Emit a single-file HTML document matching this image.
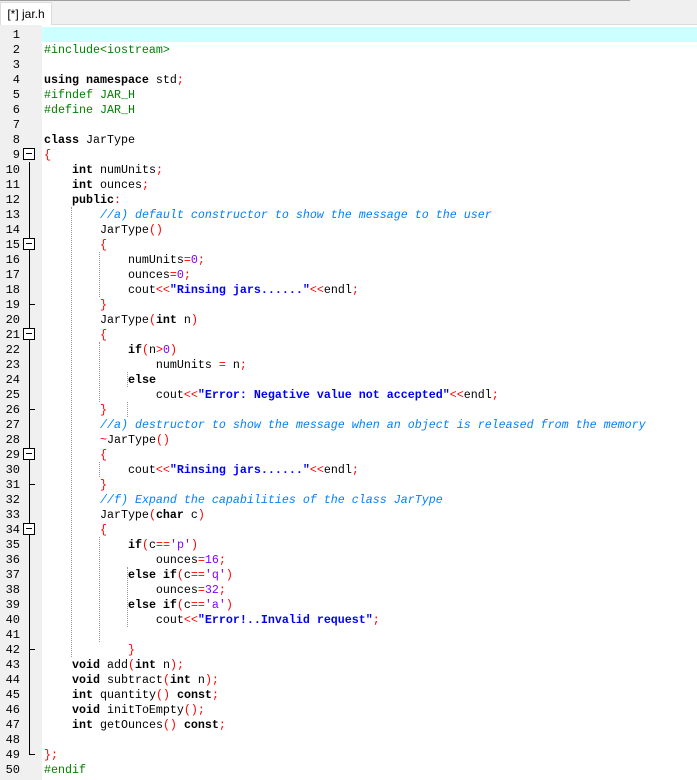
<!DOCTYPE html>
<html><head><meta charset="utf-8"><style>
body{margin:0;width:697px;height:780px;overflow:hidden;background:#fff;font-family:"Liberation Mono",monospace;}
#tabbar{position:absolute;left:0;top:0;width:697px;height:24px;background:#f0f0f0;border-bottom:1px solid #dcdcdc;}
#tabbar .line{position:absolute;left:0;top:0;width:630px;height:1px;background:#a0a0a0}
#tab{position:absolute;left:0;top:2px;width:50px;height:22px;background:#fff;border:1px solid #dcdcdc;border-bottom:none;font:12px "Liberation Sans",sans-serif;line-height:22px;text-align:center;color:#000}
#gutter{position:absolute;left:0;top:25px;width:42px;height:755px;background:#f0f0f0}
.r{position:absolute;left:0;height:15px;line-height:17px;font-size:11.67px;white-space:pre;width:697px}
.ln{position:absolute;left:0;width:20px;text-align:right;color:#000;font-size:12px}
.code{position:absolute;left:44px;color:#000}
.k{font-weight:bold}.o{color:#f00}.n{color:#8000ff}.s{color:#0000ff;font-weight:bold}.p{color:#008000}.c{color:#0080ff;font-style:italic}
.fb{position:absolute;left:23px;width:10px;height:10px;border:1px solid #000;background:#fff}
.fb:after{content:"";position:absolute;left:2px;top:4px;width:6px;height:1px;background:#000}
.vl{position:absolute;left:29px;width:1px;background:#000}
.tk{position:absolute;left:29px;width:6px;height:1px;background:#000}
.g{position:absolute;width:0;border-left:1px dotted #999}
</style></head><body>
<div id="tabbar"><div class="line"></div><div id="tab">[*] jar.h</div></div>
<div id="gutter"></div>
<div style="position:absolute;left:42px;top:27px;width:655px;height:15px;background:#ccffff"></div>
<div class="vl" style="top:162px;height:593px"></div>
<div class="fb" style="top:148px"></div>
<div class="fb" style="top:238px"></div>
<div class="fb" style="top:328px"></div>
<div class="fb" style="top:448px"></div>
<div class="fb" style="top:523px"></div>
<div class="tk" style="top:304px"></div>
<div class="tk" style="top:409px"></div>
<div class="tk" style="top:484px"></div>
<div class="tk" style="top:649px"></div>
<div class="tk" style="top:754px"></div>
<div class="g" style="left:71px;top:207px;height:450px"></div>
<div class="g" style="left:99px;top:252px;height:45px"></div>
<div class="g" style="left:99px;top:342px;height:60px"></div>
<div class="g" style="left:127px;top:372px;height:15px"></div>
<div class="g" style="left:127px;top:402px;height:15px"></div>
<div class="g" style="left:99px;top:462px;height:15px"></div>
<div class="g" style="left:99px;top:537px;height:105px"></div>
<div class="g" style="left:127px;top:567px;height:60px"></div>

<div class="r" style="top:27px"><span class="ln">1</span></div>
<div class="r" style="top:42px"><span class="ln">2</span><span class="code"><span class="p">#include&lt;iostream&gt;</span></span></div>
<div class="r" style="top:57px"><span class="ln">3</span></div>
<div class="r" style="top:72px"><span class="ln">4</span><span class="code"><span class="k">using namespace</span> std<span class="o">;</span></span></div>
<div class="r" style="top:87px"><span class="ln">5</span><span class="code"><span class="p">#ifndef JAR_H</span></span></div>
<div class="r" style="top:102px"><span class="ln">6</span><span class="code"><span class="p">#define JAR_H</span></span></div>
<div class="r" style="top:117px"><span class="ln">7</span></div>
<div class="r" style="top:132px"><span class="ln">8</span><span class="code"><span class="k">class</span> JarType</span></div>
<div class="r" style="top:147px"><span class="ln">9</span><span class="code"><span class="o">{</span></span></div>
<div class="r" style="top:162px"><span class="ln">10</span><span class="code">    <span class="k">int</span> numUnits<span class="o">;</span></span></div>
<div class="r" style="top:177px"><span class="ln">11</span><span class="code">    <span class="k">int</span> ounces<span class="o">;</span></span></div>
<div class="r" style="top:192px"><span class="ln">12</span><span class="code">    <span class="k">public</span><span class="o">:</span></span></div>
<div class="r" style="top:207px"><span class="ln">13</span><span class="code">        <span class="c">//a) default constructor to show the message to the user</span></span></div>
<div class="r" style="top:222px"><span class="ln">14</span><span class="code">        JarType<span class="o">()</span></span></div>
<div class="r" style="top:237px"><span class="ln">15</span><span class="code">        <span class="o">{</span></span></div>
<div class="r" style="top:252px"><span class="ln">16</span><span class="code">            numUnits<span class="o">=</span><span class="n">0</span><span class="o">;</span></span></div>
<div class="r" style="top:267px"><span class="ln">17</span><span class="code">            ounces<span class="o">=</span><span class="n">0</span><span class="o">;</span></span></div>
<div class="r" style="top:282px"><span class="ln">18</span><span class="code">            cout<span class="o">&lt;&lt;</span><span class="s">"Rinsing jars......"</span><span class="o">&lt;&lt;</span>endl<span class="o">;</span></span></div>
<div class="r" style="top:297px"><span class="ln">19</span><span class="code">        <span class="o">}</span></span></div>
<div class="r" style="top:312px"><span class="ln">20</span><span class="code">        JarType<span class="o">(</span><span class="k">int</span> n<span class="o">)</span></span></div>
<div class="r" style="top:327px"><span class="ln">21</span><span class="code">        <span class="o">{</span></span></div>
<div class="r" style="top:342px"><span class="ln">22</span><span class="code">            <span class="k">if</span><span class="o">(</span>n<span class="o">&gt;</span><span class="n">0</span><span class="o">)</span></span></div>
<div class="r" style="top:357px"><span class="ln">23</span><span class="code">                numUnits <span class="o">=</span> n<span class="o">;</span></span></div>
<div class="r" style="top:372px"><span class="ln">24</span><span class="code">            <span class="k">else</span></span></div>
<div class="r" style="top:387px"><span class="ln">25</span><span class="code">                cout<span class="o">&lt;&lt;</span><span class="s">"Error: Negative value not accepted"</span><span class="o">&lt;&lt;</span>endl<span class="o">;</span></span></div>
<div class="r" style="top:402px"><span class="ln">26</span><span class="code">        <span class="o">}</span></span></div>
<div class="r" style="top:417px"><span class="ln">27</span><span class="code">        <span class="c">//a) destructor to show the message when an object is released from the memory</span></span></div>
<div class="r" style="top:432px"><span class="ln">28</span><span class="code">        <span class="o">~</span>JarType<span class="o">()</span></span></div>
<div class="r" style="top:447px"><span class="ln">29</span><span class="code">        <span class="o">{</span></span></div>
<div class="r" style="top:462px"><span class="ln">30</span><span class="code">            cout<span class="o">&lt;&lt;</span><span class="s">"Rinsing jars......"</span><span class="o">&lt;&lt;</span>endl<span class="o">;</span></span></div>
<div class="r" style="top:477px"><span class="ln">31</span><span class="code">        <span class="o">}</span></span></div>
<div class="r" style="top:492px"><span class="ln">32</span><span class="code">        <span class="c">//f) Expand the capabilities of the class JarType</span></span></div>
<div class="r" style="top:507px"><span class="ln">33</span><span class="code">        JarType<span class="o">(</span><span class="k">char</span> c<span class="o">)</span></span></div>
<div class="r" style="top:522px"><span class="ln">34</span><span class="code">        <span class="o">{</span></span></div>
<div class="r" style="top:537px"><span class="ln">35</span><span class="code">            <span class="k">if</span><span class="o">(</span>c<span class="o">==</span><span class="n">'p'</span><span class="o">)</span></span></div>
<div class="r" style="top:552px"><span class="ln">36</span><span class="code">                ounces<span class="o">=</span><span class="n">16</span><span class="o">;</span></span></div>
<div class="r" style="top:567px"><span class="ln">37</span><span class="code">            <span class="k">else if</span><span class="o">(</span>c<span class="o">==</span><span class="n">'q'</span><span class="o">)</span></span></div>
<div class="r" style="top:582px"><span class="ln">38</span><span class="code">                ounces<span class="o">=</span><span class="n">32</span><span class="o">;</span></span></div>
<div class="r" style="top:597px"><span class="ln">39</span><span class="code">            <span class="k">else if</span><span class="o">(</span>c<span class="o">==</span><span class="n">'a'</span><span class="o">)</span></span></div>
<div class="r" style="top:612px"><span class="ln">40</span><span class="code">                cout<span class="o">&lt;&lt;</span><span class="s">"Error!..Invalid request"</span><span class="o">;</span></span></div>
<div class="r" style="top:627px"><span class="ln">41</span></div>
<div class="r" style="top:642px"><span class="ln">42</span><span class="code">            <span class="o">}</span></span></div>
<div class="r" style="top:657px"><span class="ln">43</span><span class="code">    <span class="k">void</span> add<span class="o">(</span><span class="k">int</span> n<span class="o">);</span></span></div>
<div class="r" style="top:672px"><span class="ln">44</span><span class="code">    <span class="k">void</span> subtract<span class="o">(</span><span class="k">int</span> n<span class="o">);</span></span></div>
<div class="r" style="top:687px"><span class="ln">45</span><span class="code">    <span class="k">int</span> quantity<span class="o">()</span> <span class="k">const</span><span class="o">;</span></span></div>
<div class="r" style="top:702px"><span class="ln">46</span><span class="code">    <span class="k">void</span> initToEmpty<span class="o">();</span></span></div>
<div class="r" style="top:717px"><span class="ln">47</span><span class="code">    <span class="k">int</span> getOunces<span class="o">()</span> <span class="k">const</span><span class="o">;</span></span></div>
<div class="r" style="top:732px"><span class="ln">48</span></div>
<div class="r" style="top:747px"><span class="ln">49</span><span class="code"><span class="o">};</span></span></div>
<div class="r" style="top:762px"><span class="ln">50</span><span class="code"><span class="p">#endif</span></span></div>
</body></html>
